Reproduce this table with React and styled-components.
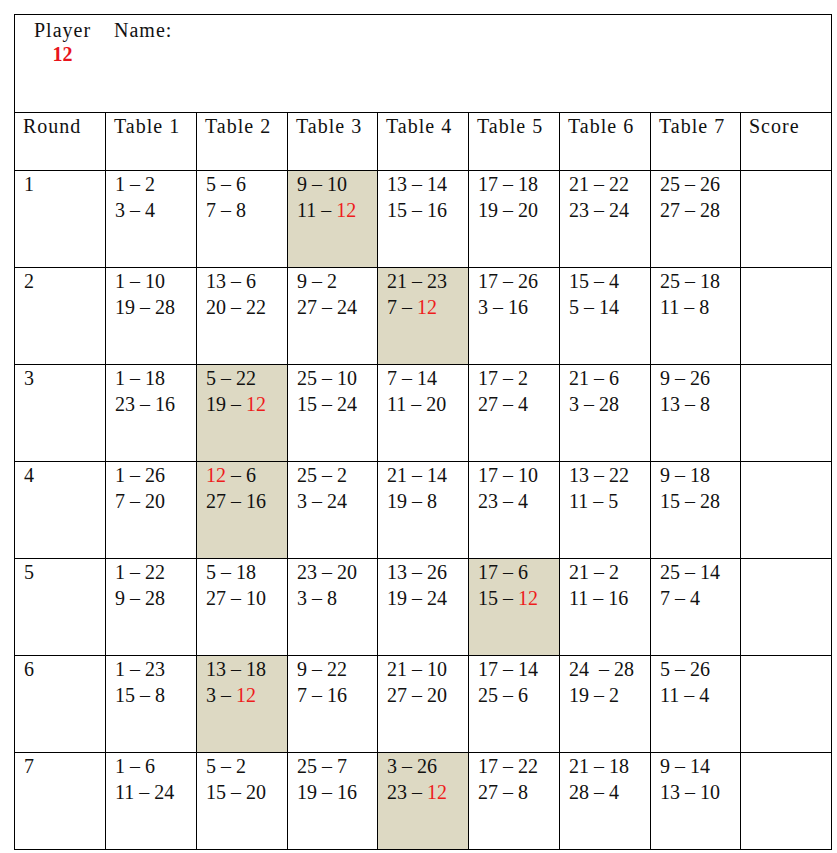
import styled, { createGlobalStyle } from "styled-components";

const GlobalStyle = createGlobalStyle`
  body {
    margin: 0;
    background: #fff;
    font-family: "Liberation Serif", "Times New Roman", serif;
    color: #111;
  }
`;

const Page = styled.div`
  padding: 14px 0 0 14px;
`;

const Sheet = styled.div`
  width: 817px;
  display: grid;
  grid-template-columns: 91px 91px 91px 90px 91px 91px 91px 90px 91px;
  grid-template-rows: 98px 58px repeat(7, 97px);
  border-top: 1px solid #000;
  border-left: 1px solid #000;
  font-size: 20px;
  line-height: 25.5px;
`;

const TitleRow = styled.div`
  grid-column: 1 / -1;
  display: grid;
  grid-template-columns: 91px 1fr;
  border-right: 1px solid #000;
  border-bottom: 1px solid #000;
  padding-top: 3px;
  line-height: 24px;
  letter-spacing: 1px;
`;

const PlayerBlock = styled.div`
  text-align: center;
  padding-left: 4px;
`;

const PlayerNumber = styled.div`
  color: #e8141b;
  font-weight: bold;
  letter-spacing: 0;
`;

const NameLabel = styled.div`
  padding-left: 8px;
`;

const Cell = styled.div`
  border-right: 1px solid #000;
  border-bottom: 1px solid #000;
  padding: 1px 9px 0;
  white-space: pre;
  background: ${(p) => (p.$shaded ? "#ddd9c3" : "#fff")};
`;

const HeadCell = styled(Cell)`
  letter-spacing: 1px;
  padding-left: 8px;
`;

const Line = styled.div``;

const Red = styled.span`
  color: #ee1c1c;
`;

const headers = ["Round", "Table 1", "Table 2", "Table 3", "Table 4", "Table 5", "Table 6", "Table 7", "Score"];

// each round: 7 tables, two pairings each; shade = table index holding player 12
const rounds = [
  { pairs: [["1 – 2", "3 – 4"], ["5 – 6", "7 – 8"], ["9 – 10", "11 – 12"], ["13 – 14", "15 – 16"], ["17 – 18", "19 – 20"], ["21 – 22", "23 – 24"], ["25 – 26", "27 – 28"]], shade: 2 },
  { pairs: [["1 – 10", "19 – 28"], ["13 – 6", "20 – 22"], ["9 – 2", "27 – 24"], ["21 – 23", "7 – 12"], ["17 – 26", "3 – 16"], ["15 – 4", "5 – 14"], ["25 – 18", "11 – 8"]], shade: 3 },
  { pairs: [["1 – 18", "23 – 16"], ["5 – 22", "19 – 12"], ["25 – 10", "15 – 24"], ["7 – 14", "11 – 20"], ["17 – 2", "27 – 4"], ["21 – 6", "3 – 28"], ["9 – 26", "13 – 8"]], shade: 1 },
  { pairs: [["1 – 26", "7 – 20"], ["12 – 6", "27 – 16"], ["25 – 2", "3 – 24"], ["21 – 14", "19 – 8"], ["17 – 10", "23 – 4"], ["13 – 22", "11 – 5"], ["9 – 18", "15 – 28"]], shade: 1 },
  { pairs: [["1 – 22", "9 – 28"], ["5 – 18", "27 – 10"], ["23 – 20", "3 – 8"], ["13 – 26", "19 – 24"], ["17 – 6", "15 – 12"], ["21 – 2", "11 – 16"], ["25 – 14", "7 – 4"]], shade: 4 },
  { pairs: [["1 – 23", "15 – 8"], ["13 – 18", "3 – 12"], ["9 – 22", "7 – 16"], ["21 – 10", "27 – 20"], ["17 – 14", "25 – 6"], ["24  – 28", "19 – 2"], ["5 – 26", "11 – 4"]], shade: 1 },
  { pairs: [["1 – 6", "11 – 24"], ["5 – 2", "15 – 20"], ["25 – 7", "19 – 16"], ["3 – 26", "23 – 12"], ["17 – 22", "27 – 8"], ["21 – 18", "28 – 4"], ["9 – 14", "13 – 10"]], shade: 3 },
];

// highlight the player's own number in red
const Pairing = ({ text }) => {
  const parts = text.split(/(\b12\b)/);
  return (
    <Line>
      {parts.map((p, i) => (p === "12" ? <Red key={i}>12</Red> : p))}
    </Line>
  );
};

export default function App() {
  return (
    <Page>
      <GlobalStyle />
      <Sheet>
        <TitleRow>
          <PlayerBlock>
            Player
            <PlayerNumber>12</PlayerNumber>
          </PlayerBlock>
          <NameLabel>Name:</NameLabel>
        </TitleRow>
        {headers.map((h) => (
          <HeadCell key={h}>{h}</HeadCell>
        ))}
        {rounds.map((r, ri) => [
          <Cell key={`r${ri}`}>{ri + 1}</Cell>,
          ...r.pairs.map((pair, ti) => (
            <Cell key={`r${ri}t${ti}`} $shaded={ti === r.shade}>
              <Pairing text={pair[0]} />
              <Pairing text={pair[1]} />
            </Cell>
          )),
          <Cell key={`r${ri}s`} />,
        ])}
      </Sheet>
    </Page>
  );
}
